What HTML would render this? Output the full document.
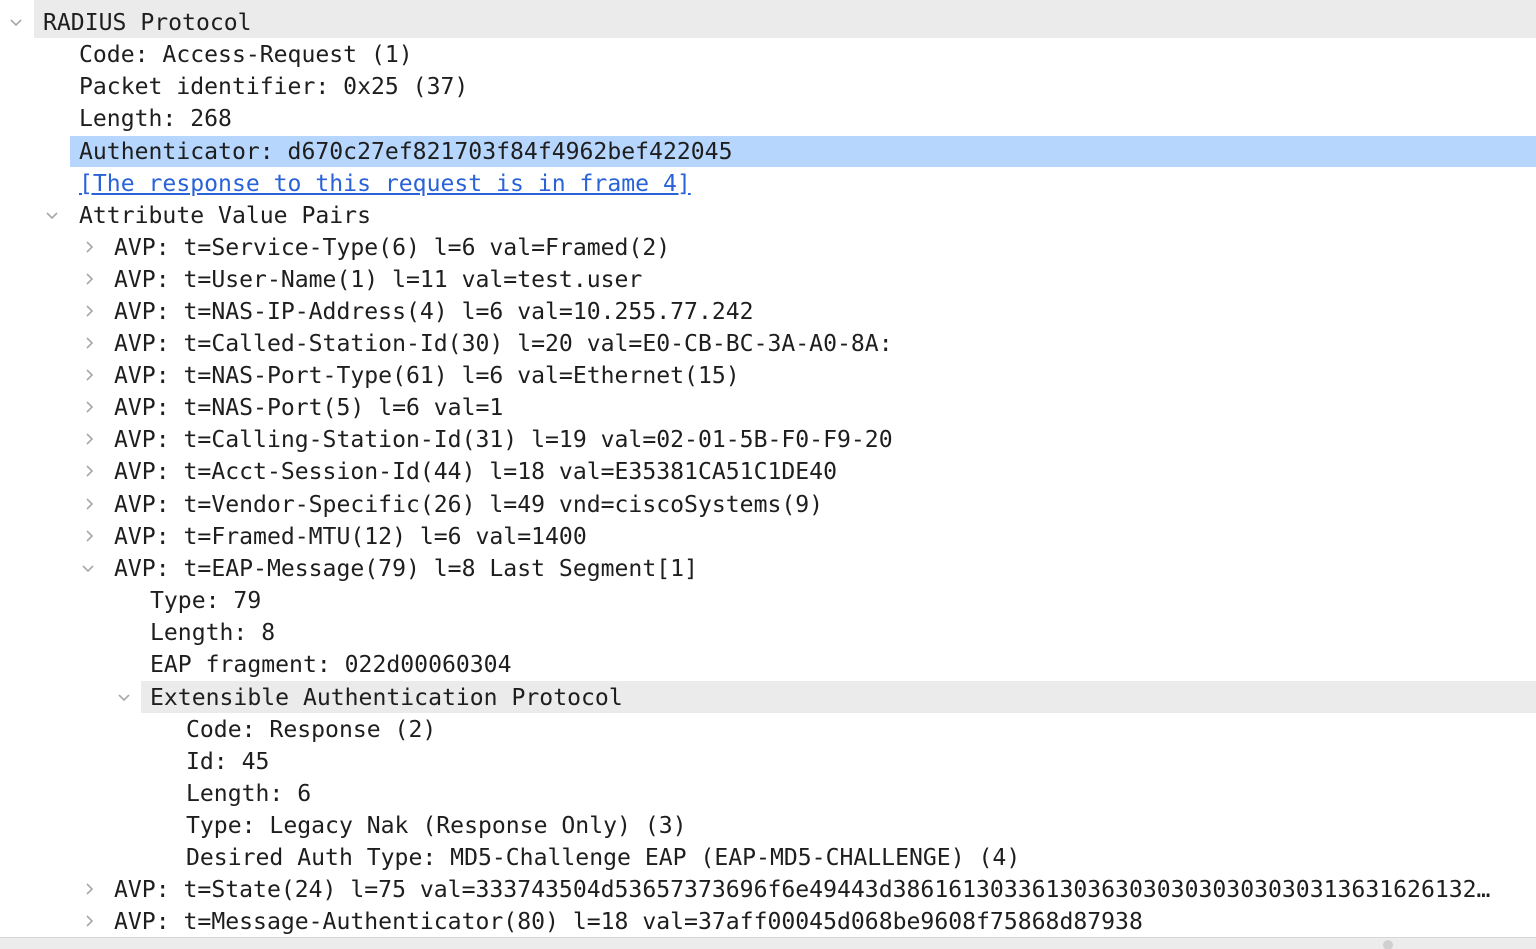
<!DOCTYPE html>
<html><head><meta charset="utf-8"><style>
html,body{margin:0;padding:0;background:#fff;width:1536px;height:949px;overflow:hidden;}
body{font-family:"DejaVu Sans Mono","Liberation Mono",monospace;font-size:23.1px;color:#1e1e1e;position:relative;}
.r{position:absolute;left:0;right:0;height:32px;line-height:32px;white-space:pre;}
.t{position:absolute;top:1px;}
.c{position:absolute;top:9px;width:14px;height:14px;}
.c svg{display:block}
a{color:#2a62d8;text-decoration:underline;}
.sb{position:absolute;left:0;right:0;top:937px;height:12px;background:#ececec;border-top:1px solid #d6d6d6;}
</style></head><body>
<div style="position:absolute;left:34px;right:0;top:0;height:38px;background:#ebebeb"></div>
<div style="position:absolute;left:70px;right:0;top:136px;height:31px;background:#b6d6fd"></div>
<div style="position:absolute;left:141px;right:0;top:681px;height:32px;background:#ebebeb"></div>
<svg width="0" height="0" style="position:absolute"><defs>
<symbol id="d" viewBox="0 0 14 14"><path d="M2 5 L7 10 L12 5" fill="none" stroke="#a8a8a8" stroke-width="1.6"/></symbol>
<symbol id="rt" viewBox="0 0 14 14"><path d="M5 2 L10 7 L5 12" fill="none" stroke="#a8a8a8" stroke-width="1.6"/></symbol>
</defs></svg>
<div class="r" style="top:6px"><span class="c" style="left:9px"><svg width="14" height="14"><use href="#d"/></svg></span><span class="t" style="left:43px">RADIUS Protocol</span></div>
<div class="r" style="top:38px"><span class="t" style="left:79px">Code: Access-Request (1)</span></div>
<div class="r" style="top:70px"><span class="t" style="left:79px">Packet identifier: 0x25 (37)</span></div>
<div class="r" style="top:102px"><span class="t" style="left:79px">Length: 268</span></div>
<div class="r" style="top:135px"><span class="t" style="left:79px">Authenticator: d670c27ef821703f84f4962bef422045</span></div>
<div class="r" style="top:167px"><span class="t" style="left:79px"><a>[The response to this request is in frame 4]</a></span></div>
<div class="r" style="top:199px"><span class="c" style="left:45px"><svg width="14" height="14"><use href="#d"/></svg></span><span class="t" style="left:79px">Attribute Value Pairs</span></div>
<div class="r" style="top:231px"><span class="c" style="left:82px"><svg width="14" height="14"><use href="#rt"/></svg></span><span class="t" style="left:114px">AVP: t=Service-Type(6) l=6 val=Framed(2)</span></div>
<div class="r" style="top:263px"><span class="c" style="left:82px"><svg width="14" height="14"><use href="#rt"/></svg></span><span class="t" style="left:114px">AVP: t=User-Name(1) l=11 val=test.user</span></div>
<div class="r" style="top:295px"><span class="c" style="left:82px"><svg width="14" height="14"><use href="#rt"/></svg></span><span class="t" style="left:114px">AVP: t=NAS-IP-Address(4) l=6 val=10.255.77.242</span></div>
<div class="r" style="top:327px"><span class="c" style="left:82px"><svg width="14" height="14"><use href="#rt"/></svg></span><span class="t" style="left:114px">AVP: t=Called-Station-Id(30) l=20 val=E0-CB-BC-3A-A0-8A:</span></div>
<div class="r" style="top:359px"><span class="c" style="left:82px"><svg width="14" height="14"><use href="#rt"/></svg></span><span class="t" style="left:114px">AVP: t=NAS-Port-Type(61) l=6 val=Ethernet(15)</span></div>
<div class="r" style="top:391px"><span class="c" style="left:82px"><svg width="14" height="14"><use href="#rt"/></svg></span><span class="t" style="left:114px">AVP: t=NAS-Port(5) l=6 val=1</span></div>
<div class="r" style="top:423px"><span class="c" style="left:82px"><svg width="14" height="14"><use href="#rt"/></svg></span><span class="t" style="left:114px">AVP: t=Calling-Station-Id(31) l=19 val=02-01-5B-F0-F9-20</span></div>
<div class="r" style="top:455px"><span class="c" style="left:82px"><svg width="14" height="14"><use href="#rt"/></svg></span><span class="t" style="left:114px">AVP: t=Acct-Session-Id(44) l=18 val=E35381CA51C1DE40</span></div>
<div class="r" style="top:488px"><span class="c" style="left:82px"><svg width="14" height="14"><use href="#rt"/></svg></span><span class="t" style="left:114px">AVP: t=Vendor-Specific(26) l=49 vnd=ciscoSystems(9)</span></div>
<div class="r" style="top:520px"><span class="c" style="left:82px"><svg width="14" height="14"><use href="#rt"/></svg></span><span class="t" style="left:114px">AVP: t=Framed-MTU(12) l=6 val=1400</span></div>
<div class="r" style="top:552px"><span class="c" style="left:81px"><svg width="14" height="14"><use href="#d"/></svg></span><span class="t" style="left:114px">AVP: t=EAP-Message(79) l=8 Last Segment[1]</span></div>
<div class="r" style="top:584px"><span class="t" style="left:150px">Type: 79</span></div>
<div class="r" style="top:616px"><span class="t" style="left:150px">Length: 8</span></div>
<div class="r" style="top:648px"><span class="t" style="left:150px">EAP fragment: 022d00060304</span></div>
<div class="r" style="top:681px"><span class="c" style="left:117px"><svg width="14" height="14"><use href="#d"/></svg></span><span class="t" style="left:150px">Extensible Authentication Protocol</span></div>
<div class="r" style="top:713px"><span class="t" style="left:186px">Code: Response (2)</span></div>
<div class="r" style="top:745px"><span class="t" style="left:186px">Id: 45</span></div>
<div class="r" style="top:777px"><span class="t" style="left:186px">Length: 6</span></div>
<div class="r" style="top:809px"><span class="t" style="left:186px">Type: Legacy Nak (Response Only) (3)</span></div>
<div class="r" style="top:841px"><span class="t" style="left:186px">Desired Auth Type: MD5-Challenge EAP (EAP-MD5-CHALLENGE) (4)</span></div>
<div class="r" style="top:873px"><span class="c" style="left:82px"><svg width="14" height="14"><use href="#rt"/></svg></span><span class="t" style="left:114px">AVP: t=State(24) l=75 val=333743504d53657373696f6e49443d386161303361303630303030303030313631626132…</span></div>
<div class="r" style="top:905px"><span class="c" style="left:82px"><svg width="14" height="14"><use href="#rt"/></svg></span><span class="t" style="left:114px">AVP: t=Message-Authenticator(80) l=18 val=37aff00045d068be9608f75868d87938</span></div>
<div class="sb"><div style="position:absolute;left:1383px;top:2px;width:10px;height:10px;border-radius:5px;background:#d0d0d0"></div></div>
</body></html>
